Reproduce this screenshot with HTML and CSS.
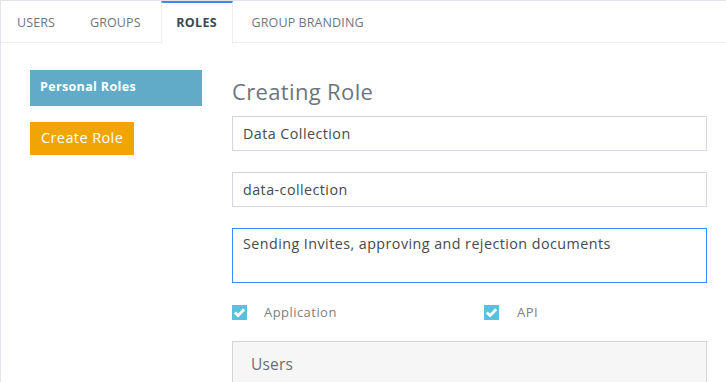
FILE: index.html
```html
<!DOCTYPE html>
<html>
<head>
<meta charset="utf-8">
<link rel="stylesheet" href="styles.css">
</head>
<body>
<div class="page">
  <nav class="tabs">
    <div class="tab tab-users">USERS</div>
    <div class="tab tab-groups">GROUPS</div>
    <div class="tab active">ROLES</div>
    <div class="tab tab-branding">GROUP BRANDING</div>
  </nav>
  <div class="content">
    <aside class="side">
      <div class="btn-personal">Personal Roles</div>
      <div class="btn-create">Create Role</div>
    </aside>
    <main class="main">
      <h1 class="title">Creating Role</h1>
      <input class="field" type="text" value="Data Collection">
      <input class="field" type="text" value="data-collection">
      <textarea class="field area">Sending Invites, approving and rejection documents</textarea>
      <div class="checks">
        <label class="check">
          <span class="box"><svg width="15" height="15" viewBox="0 0 15 15"><path d="M2.8 7.4 L6.1 10.6 L12.2 4.2" fill="none" stroke="#fff" stroke-width="2.8"/></svg></span>
          <span class="check-label">Application</span>
        </label>
        <label class="check">
          <span class="box"><svg width="15" height="15" viewBox="0 0 15 15"><path d="M2.8 7.4 L6.1 10.6 L12.2 4.2" fill="none" stroke="#fff" stroke-width="2.8"/></svg></span>
          <span class="check-label">API</span>
        </label>
      </div>
      <section class="panel">
        <div class="panel-title">Users</div>
      </section>
    </main>
  </div>
</div>
</body>
</html>
```
FILE: styles.css
```css
* { box-sizing: border-box; }
html, body { margin: 0; padding: 0; background: #fff; }
body { font-family: "Open Sans", "Liberation Sans", sans-serif; overflow: hidden; height: 382px; }
.page {
  border-top: 1px solid #e2e2e8;
  border-left: 1px solid #e2e2e8;
  height: 382px;
}
.tabs {
  display: flex;
  height: 42px;
  border-bottom: 1px solid #efeff2;
}
.tab {
  padding: 0 17px;
  font-size: 12.5px;
  color: #6d7680;
  display: flex;
  align-items: center;
  height: 42px;
  letter-spacing: 0.1px;
}
.tab-users { padding-left: 16px; padding-right: 18px; }
.tab-groups { padding-left: 17px; padding-right: 20px; }
.tab-branding { padding-left: 19px; }
.tab.active {
  border-top: 2px solid #3f8ae8;
  border-left: 1px solid #efeff2;
  border-right: 1px solid #efeff2;
  background: #fff;
  height: 43px;
  margin-bottom: -1px;
  width: 72px;
  justify-content: center;
  font-weight: 700;
  color: #3e4852;
  padding: 0 0 2px;
  letter-spacing: 0.3px;
}
.content {
  display: flex;
  padding-top: 27px;
}
.side {
  width: 231px;
  padding-left: 29px;
  padding-right: 30px;
  display: flex;
  flex-direction: column;
  align-items: flex-start;
  gap: 16px;
}
.btn-personal {
  width: 172px;
  height: 36px;
  background: #62abc8;
  color: #fff;
  font-weight: 700;
  font-size: 12.5px;
  letter-spacing: 0.35px;
  padding-left: 10px;
  display: flex;
  align-items: center;
  padding-bottom: 4px;
}
.btn-create {
  height: 33px;
  width: 104px;
  background: #f0a505;
  color: #fff;
  font-size: 14.5px;
  letter-spacing: 0.4px;
  padding: 0 0 2px 11px;
  display: flex;
  align-items: center;
}
.main {
  width: 475px;
  display: flex;
  flex-direction: column;
}
.title {
  margin: 8px 0 12px;
  font-size: 22px;
  letter-spacing: 0.35px;
  font-weight: 400;
  color: #6b7580;
  line-height: 26px;
}
.field {
  display: block;
  width: 475px;
  height: 35px;
  border: 1px solid #d3d7de;
  border-radius: 0;
  padding: 0 10px;
  font-family: inherit;
  font-size: 14.3px;
  letter-spacing: 0.45px;
  color: #454a50;
  margin: 0 0 21px;
  outline: none;
  background: #fff;
}
.area {
  height: 55px;
  border-color: #3d8cf2;
  resize: none;
  padding: 5px 10px;
  line-height: 20px;
  margin-bottom: 21px;
}
.checks {
  display: flex;
  height: 16px;
  margin-bottom: 21px;
}
.check {
  display: flex;
  align-items: center;
  flex: 0 0 252px;
}
.box {
  width: 15px;
  height: 15px;
  background: #5bc0de;
  display: block;
  margin-right: 17px;
}
.check + .check .box { margin-right: 18px; }
.box svg { display: block; }
.check-label {
  font-size: 13px;
  letter-spacing: 0.45px;
  color: #7a7f86;
}
.panel {
  background: #f6f6f6;
  border: 1px solid #d4d4d4;
  height: 60px;
  padding: 11px 18px;
}
.panel-title {
  font-size: 15.5px;
  letter-spacing: 0.2px;
  color: #6a6f76;
}
```
